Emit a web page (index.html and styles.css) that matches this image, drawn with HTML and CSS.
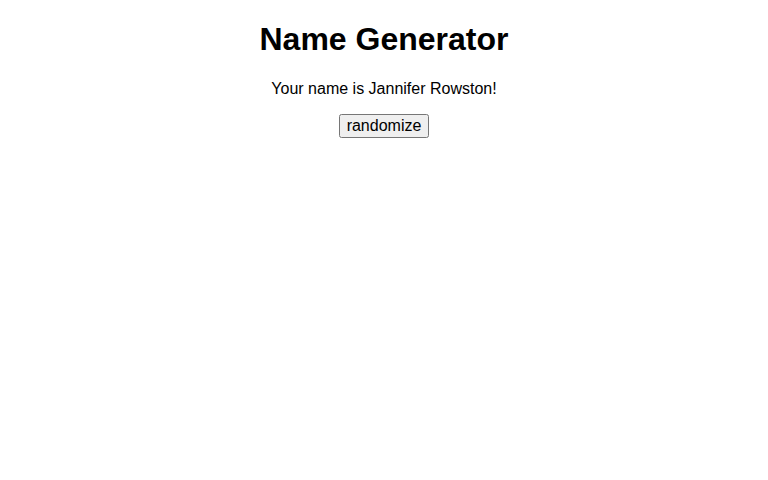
FILE: index.html
```html
<!DOCTYPE html>
<html lang="en">
<head>
    <meta charset="UTF-8">
    <meta name="viewport" content="width=device-width, initial-scale=1.0">
    <title>Name Generator</title>
    <link rel="stylesheet" href="styles.css">
</head>
<body>
    <div class="app">
        <h1 class="title">Name Generator</h1>
        <p class="name-line">Your name is Jannifer Rowston!</p>
        <button class="random-btn">randomize</button>
    </div>
</body>
</html>
```

FILE: styles.css
```css
body {
    margin: 0;
    font-family: "Liberation Sans", Arial, sans-serif;
    color: #000;
    background: #fff;
}

.app {
    text-align: center;
}

.title {
    font-size: 32px;
}

.name-line {
    font-size: 16px;
}

.random-btn {
    font-family: "Liberation Sans", Arial, sans-serif;
    font-size: 16px;
}
```
